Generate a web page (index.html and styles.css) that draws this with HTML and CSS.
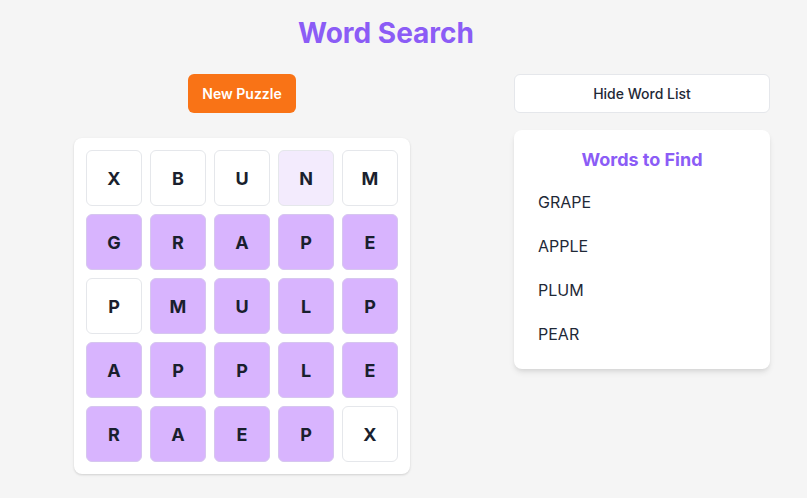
FILE: index.html
```html
<!DOCTYPE html>
<html>
<head>
<meta charset="utf-8">
<link rel="stylesheet" href="styles.css">
</head>
<body>
<h1 class="title">Word Search</h1>
<div class="layout">
  <div class="left">
    <button class="btn-new">New Puzzle</button>
    <div class="board">
      <div class="cell">X</div><div class="cell">B</div><div class="cell">U</div><div class="cell hover">N</div><div class="cell">M</div>
      <div class="cell found">G</div><div class="cell found">R</div><div class="cell found">A</div><div class="cell found">P</div><div class="cell found">E</div>
      <div class="cell">P</div><div class="cell found">M</div><div class="cell found">U</div><div class="cell found">L</div><div class="cell found">P</div>
      <div class="cell found">A</div><div class="cell found">P</div><div class="cell found">P</div><div class="cell found">L</div><div class="cell found">E</div>
      <div class="cell found">R</div><div class="cell found">A</div><div class="cell found">E</div><div class="cell found">P</div><div class="cell">X</div>
    </div>
  </div>
  <div class="right">
    <button class="btn-toggle">Hide Word List</button>
    <div class="panel">
      <h2 class="panel-title">Words to Find</h2>
      <ul class="words">
        <li>GRAPE</li>
        <li>APPLE</li>
        <li>PLUM</li>
        <li>PEAR</li>
      </ul>
    </div>
  </div>
</div>
</body>
</html>
```

FILE: styles.css
```css
* { box-sizing: border-box; }
html, body { margin: 0; padding: 0; }
body {
  background: #f5f5f5;
  font-family: Inter, "Noto Sans", sans-serif;
  color: #1f2937;
  width: 807px;
  height: 498px;
  overflow: hidden;
}
.title {
  margin: 0;
  padding-top: 15px;
  padding-right: 35px;
  text-align: center;
  font-size: 28px;
  line-height: 36px;
  font-weight: 700;
  color: #8b5cf6;
}
.layout {
  display: flex;
  align-items: flex-start;
  margin-top: 23px;
  padding-left: 74px;
  gap: 104px;
}
.left {
  width: 336px;
  display: flex;
  flex-direction: column;
  align-items: center;
}
.btn-new {
  width: 108px;
  height: 39px;
  border: none;
  border-radius: 6px;
  background: #f97316;
  color: #fff;
  font-family: inherit;
  font-size: 14px;
  font-weight: 600;
  padding: 0;
}
.board {
  margin-top: 25px;
  width: 336px;
  padding: 12px;
  background: #fff;
  border-radius: 8px;
  box-shadow: 0 1px 3px rgba(0,0,0,0.1), 0 1px 2px rgba(0,0,0,0.06);
  display: grid;
  grid-template-columns: repeat(5, 56px);
  grid-auto-rows: 56px;
  gap: 8px;
}
.cell {
  display: flex;
  align-items: center;
  justify-content: center;
  border: 1px solid #e5e7eb;
  border-radius: 6px;
  background: #fff;
  font-size: 18px;
  font-weight: 700;
  color: #1a1f2e;
}
.cell.found { background: #d8b4fe; border-color: #d6c6ef; }
.cell.hover { background: #f3ebfd; }
.right {
  width: 256px;
  display: flex;
  flex-direction: column;
  gap: 17px;
}
.btn-toggle {
  height: 39px;
  width: 100%;
  background: #fff;
  border: 1px solid #e5e7eb;
  border-radius: 6px;
  font-family: inherit;
  font-size: 14px;
  font-weight: 500;
  color: #1f2937;
  padding: 0;
}
.panel {
  background: #fff;
  border-radius: 8px;
  box-shadow: 0 4px 6px -1px rgba(0,0,0,0.1), 0 2px 4px -1px rgba(0,0,0,0.06);
  padding: 16px 24px 13px;
}
.panel-title {
  margin: 0 0 6px;
  text-align: center;
  font-size: 18px;
  line-height: 28px;
  font-weight: 700;
  color: #8b5cf6;
}
.words {
  list-style: none;
  margin: 0;
  padding: 0;
}
.words li {
  font-size: 16px;
  line-height: 24px;
  padding: 10px 0;
  color: #1f2937;
}
```
